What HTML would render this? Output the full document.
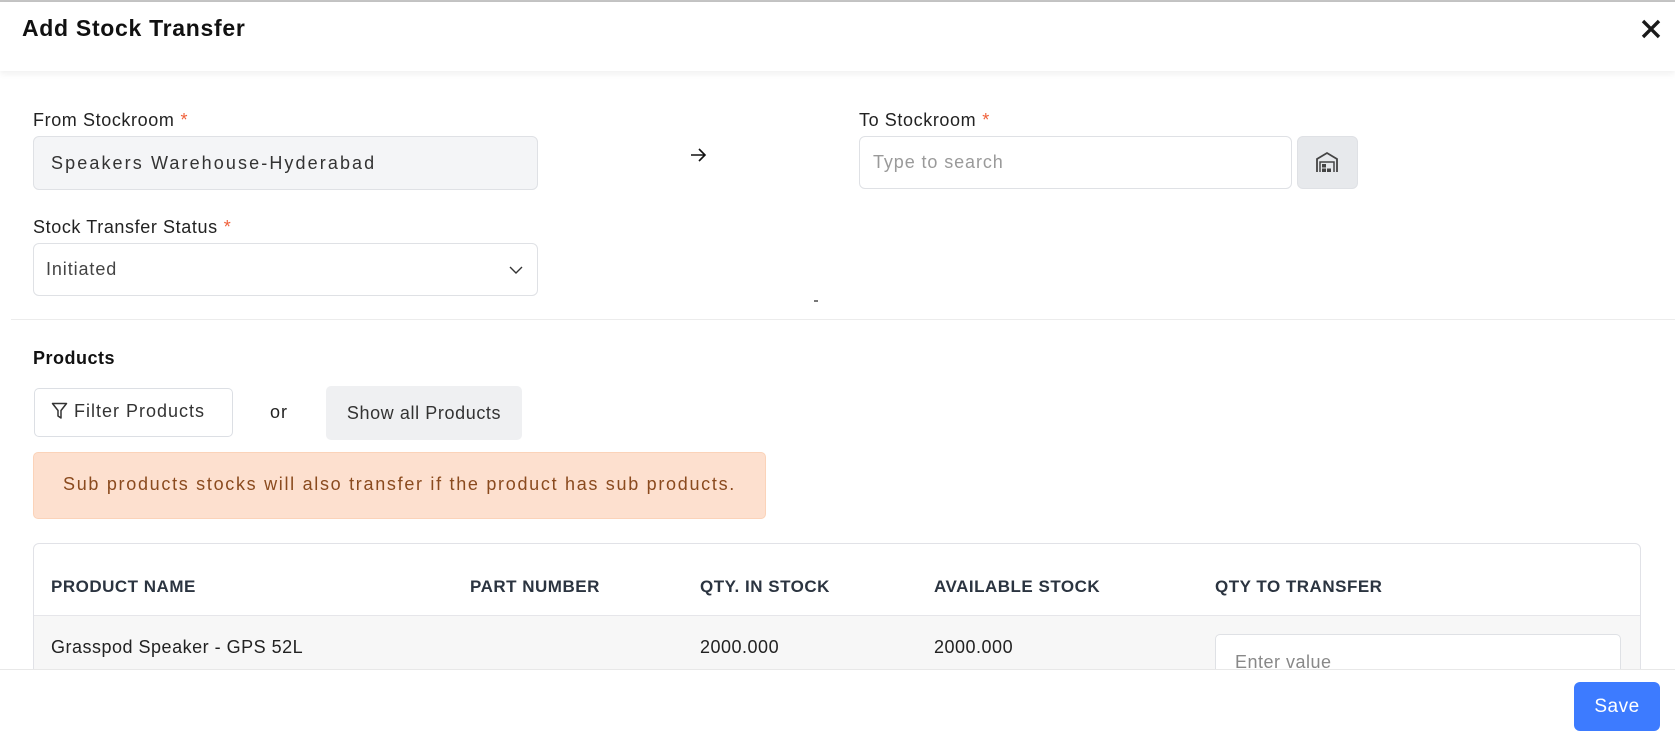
<!DOCTYPE html>
<html><head><meta charset="utf-8"><style>
*{box-sizing:border-box;margin:0;padding:0}
body{width:1675px;height:735px;overflow:hidden;background:#fff;font-family:"Liberation Sans",sans-serif;color:#1f1f1f;position:relative}
.a{position:absolute}
.lbl{font-size:18px;color:#222;letter-spacing:0.6px}
.lbl i{color:#f0603a;font-style:normal;margin-left:6px}
.inp{border:1px solid #dfe1e5;border-radius:6px;font-size:18px;display:flex;align-items:center;letter-spacing:0.9px}
.th{position:absolute;top:577px;font-size:17px;font-weight:bold;color:#2b3440;letter-spacing:0.5px}
.td{position:absolute;top:637px;font-size:18px;color:#222;letter-spacing:0.5px}
</style></head><body>
<div class="a" style="left:0;top:0;width:1675px;height:2px;background:#c4c4c4"></div>
<div class="a" style="left:0;top:2px;width:1675px;height:69px;background:#fff;box-shadow:0 3px 6px rgba(0,0,0,0.06)"></div>
<div class="a" style="left:22px;top:15px;font-size:23px;font-weight:bold;color:#111;letter-spacing:0.7px">Add Stock Transfer</div>
<svg class="a" style="left:1641px;top:19px" width="20" height="20" viewBox="0 0 20 20"><path d="M2 2L18 18M18 2L2 18" stroke="#1a1a1a" stroke-width="3.4"/></svg>

<div class="a lbl" style="left:33px;top:110px">From Stockroom<i>*</i></div>
<div class="a inp" style="left:33px;top:136px;width:505px;height:54px;background:#f4f5f7;padding-left:17px;color:#333;letter-spacing:2.1px">Speakers Warehouse-Hyderabad</div>
<svg class="a" style="left:689px;top:146px" width="18" height="18" viewBox="0 0 18 18"><path d="M2 9H16M10 3L16 9L10 15" stroke="#111" stroke-width="1.6" fill="none"/></svg>
<div class="a lbl" style="left:859px;top:110px">To Stockroom<i>*</i></div>
<div class="a inp" style="left:859px;top:136px;width:433px;height:53px;background:#fff;padding-left:13px;color:#9a9a9a">Type to search</div>
<div class="a" style="left:1297px;top:136px;width:61px;height:53px;background:#e7e9ec;border:1px solid #dfe1e5;border-radius:6px"></div>
<svg class="a" style="left:1315px;top:151px" width="24" height="22" viewBox="0 0 24 22"><path d="M2 21V8L12 2L22 8V21" stroke="#444" stroke-width="1.8" fill="none"/><path d="M5 21V11H19V21" stroke="#444" stroke-width="1.5" fill="none"/><rect x="7" y="13" width="4" height="3.5" fill="#444"/><rect x="7" y="17.5" width="4" height="3.5" fill="#444"/><rect x="12" y="17.5" width="4" height="3.5" fill="#444"/></svg>

<div class="a lbl" style="left:33px;top:217px">Stock Transfer Status<i>*</i></div>
<div class="a inp" style="left:33px;top:243px;width:505px;height:53px;background:#fff;padding-left:12px;color:#444">Initiated</div>
<svg class="a" style="left:509px;top:265px" width="14" height="10" viewBox="0 0 14 10"><path d="M1 2L7 8L13 2" stroke="#333" stroke-width="1.4" fill="none"/></svg>
<div class="a" style="left:814px;top:300px;width:4px;height:2px;background:#777"></div>
<div class="a" style="left:11px;top:319px;width:1664px;height:1px;background:#ececec"></div>

<div class="a" style="left:33px;top:348px;font-size:18px;font-weight:bold;color:#111;letter-spacing:0.5px">Products</div>
<div class="a" style="left:34px;top:388px;width:199px;height:49px;border:1px solid #dcdfe4;border-radius:5px;background:#fff"></div>
<svg class="a" style="left:51px;top:402px" width="17" height="18" viewBox="0 0 17 18"><path d="M1.5 1.5H15.5L10 8.5V16L7 14V8.5Z" stroke="#333" stroke-width="1.5" fill="none" stroke-linejoin="round"/></svg>
<div class="a" style="left:74px;top:401px;font-size:18px;color:#333;letter-spacing:1px">Filter Products</div>
<div class="a" style="left:270px;top:402px;font-size:18px;color:#222;letter-spacing:1px">or</div>
<div class="a" style="left:326px;top:386px;width:196px;height:54px;background:#eff0f2;border-radius:5px;font-size:18px;color:#333;display:flex;align-items:center;justify-content:center;letter-spacing:0.6px">Show all Products</div>
<div class="a" style="left:33px;top:452px;width:733px;height:67px;background:#fde0cf;border:1px solid #fbd3b9;border-radius:5px;font-size:18px;color:#8a4a1e;padding:21px 0 0 29px;letter-spacing:1.7px;white-space:nowrap">Sub products stocks will also transfer if the product has sub products.</div>

<div class="a" style="left:33px;top:543px;width:1608px;height:180px;border:1px solid #e1e2e7;border-radius:6px;background:#fff;overflow:hidden">
<div class="a" style="left:0;top:71px;width:1608px;height:130px;background:#f7f7f7;border-top:1px solid #e6e6ea"></div>
</div>
<div class="th" style="left:51px">PRODUCT NAME</div>
<div class="th" style="left:470px">PART NUMBER</div>
<div class="th" style="left:700px">QTY. IN STOCK</div>
<div class="th" style="left:934px">AVAILABLE STOCK</div>
<div class="th" style="left:1215px">QTY TO TRANSFER</div>
<div class="td" style="left:51px">Grasspod Speaker - GPS 52L</div>
<div class="td" style="left:700px">2000.000</div>
<div class="td" style="left:934px">2000.000</div>
<div class="a" style="left:1215px;top:634px;width:406px;height:60px;background:#fff;border:1px solid #dfe1e5;border-radius:5px;font-size:18px;color:#888;padding:17px 0 0 19px;letter-spacing:0.5px">Enter value</div>

<div class="a" style="left:0;top:669px;width:1675px;height:66px;background:#fff;border-top:1px solid #e8e8e8;z-index:5"></div>
<div class="a" style="left:1574px;top:682px;width:86px;height:49px;background:#3d7bff;border-radius:6px;color:#fff;font-size:19px;display:flex;align-items:center;justify-content:center;z-index:6;letter-spacing:0.5px">Save</div>
</body></html>
